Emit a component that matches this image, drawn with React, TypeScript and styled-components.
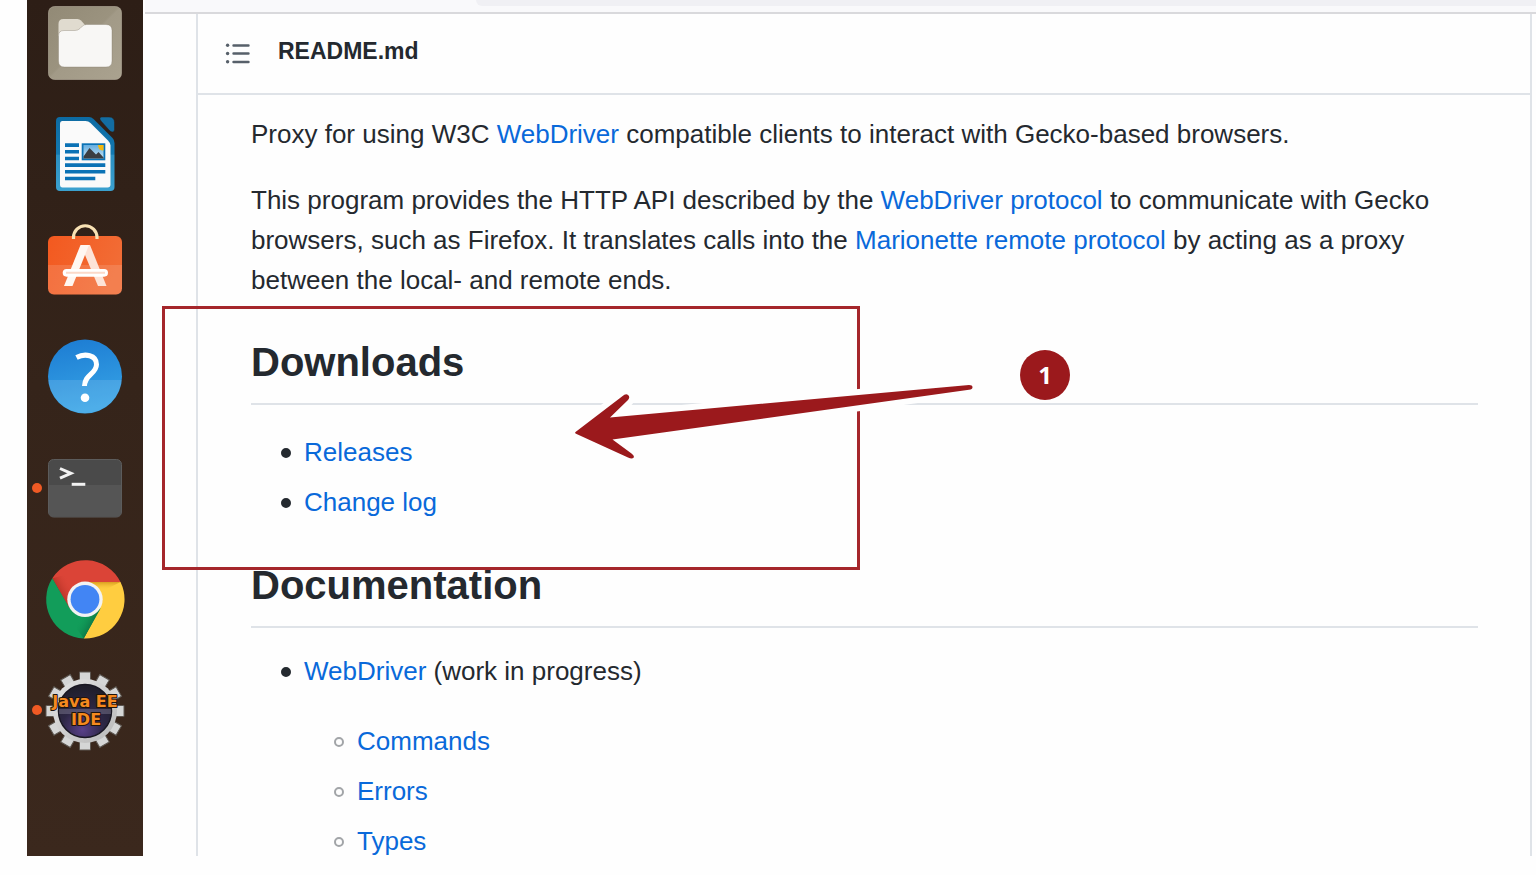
import React from "react";
import styled, { createGlobalStyle } from "styled-components";

const colors = {
  text: "#24292f",
  link: "#0969da",
  line: "#dfe3e8",
  mark: "#9b191c",
};

const GlobalStyle = createGlobalStyle`
  *, *::before, *::after { box-sizing: border-box; }
  body { margin: 0; background: #fefefe; }
`;

const Screen = styled.div`
  display: flex;
  height: 100vh;
  padding: 0 0 19px 27px;
  overflow: hidden;
  font-family: "Liberation Sans", Arial, sans-serif;
  color: ${colors.text};
`;

const Dock = styled.nav`
  flex: 0 0 116px;
  display: flex;
  flex-direction: column;
  align-items: center;
  gap: 31px;
  padding-top: 4px;
  background: linear-gradient(#2d1e16, #35241a 45%, #3b281d);
  overflow: hidden;
`;

const DockButton = styled.button<{ $running?: boolean }>`
  position: relative;
  flex: none;
  width: 80px;
  height: 80px;
  padding: 0;
  border: 0;
  background: none;

  &::before {
    content: "";
    display: ${(p) => (p.$running ? "block" : "none")};
    position: absolute;
    left: -13px;
    top: 35px;
    width: 10px;
    height: 10px;
    border-radius: 50%;
    background: #f05a24;
  }

  svg {
    display: block;
    width: 80px;
    height: 80px;
    overflow: visible;
  }
`;

const Browser = styled.div`
  flex: 1;
  min-width: 0;
  display: flex;
  flex-direction: column;
  overflow: hidden;
  padding-left: 2px;
`;

const Toolbar = styled.div`
  flex: none;
  height: 14px;
  display: flex;
  align-items: flex-start;
  padding-left: 331px;
  background: #f9f9fb;
  border-bottom: 2px solid #d9d9dc;
`;

const AddressBar = styled.div`
  flex: 1;
  height: 6px;
  border-bottom-left-radius: 6px;
  background: #f0f0f4;
`;

const Page = styled.main`
  flex: 1;
  min-height: 0;
  padding: 0 4px 0 51px;
`;

const Readme = styled.article`
  position: relative;
  height: 100%;
  border: solid ${colors.line};
  border-width: 0 2px;
`;

const ReadmeHeader = styled.header`
  display: flex;
  align-items: center;
  gap: 28px;
  height: 81px;
  padding: 0 27px 6px;
  border-bottom: 2px solid ${colors.line};

  svg {
    flex: none;
    width: 25px;
    height: 25px;
    margin-top: 6px;
  }
`;

const FileName = styled.h1`
  margin: 0;
  font-size: 23px;
  line-height: 36px;
  font-weight: 700;
`;

const Body = styled.div`
  padding: 19px 52px 0 53px;
  font-size: 26px;
  line-height: 40px;
`;

const Paragraph = styled.p`
  margin: 0 0 26px;
`;

const Heading = styled.h2`
  margin: 37px 0 23px;
  padding-bottom: 16px;
  border-bottom: 2px solid ${colors.line};
  font-size: 40px;
  line-height: 50px;
  font-weight: 700;
`;

const listMargins = {
  tight: "27px 0 38px",
  loose: "23px 0 38px",
  nested: "30px 0 0",
};

const List = styled.ul<{ $kind: keyof typeof listMargins }>`
  margin: ${(p) => listMargins[p.$kind]};
  padding-left: 53px;
  list-style-type: none;

  & > li {
    position: relative;
  }

  & > li + li {
    margin-top: 10px;
  }

  & > li::before {
    content: "";
    position: absolute;
    left: -23px;
    top: 16px;
    width: 10px;
    height: 10px;
    border-radius: 50%;
    border: ${(p) => (p.$kind === "nested" ? "2px solid #a2a5a8" : `5px solid ${colors.text}`)};
  }
`;

const Link = styled.a`
  color: ${colors.link};
  text-decoration: none;
`;

const Highlight = styled.div`
  position: absolute;
  left: -36px;
  top: 292px;
  width: 698px;
  height: 264px;
  border: 3px solid #a5262b;
`;

const Arrow = styled.svg`
  position: absolute;
  left: 364px;
  top: 367px;
  width: 430px;
  height: 90px;
  overflow: visible;
`;

const Badge = styled.div`
  position: absolute;
  left: 822px;
  top: 336px;
  width: 50px;
  height: 50px;
  border-radius: 50%;
  background: ${colors.mark};
  color: #fff;
  font: 700 24px/50px "Open Sans", sans-serif;
  text-align: center;
`;

const FilesIcon = () => (
  <svg viewBox="0 0 80 80" aria-hidden="true">
    <defs>
      <linearGradient id="files" x1="0" y1="0" x2="1" y2="1">
        <stop offset="0" stopColor="#928a76" />
        <stop offset="0.48" stopColor="#9b937f" />
        <stop offset="0.5" stopColor="#a29a87" />
        <stop offset="1" stopColor="#aaa28f" />
      </linearGradient>
    </defs>
    <rect x="3.500" y="2.500" width="73" height="73" rx="6" fill="url(#files)" stroke="#b5ae9c" strokeOpacity=".6" strokeWidth="1" />
    <path d="M13.500 32V20q0-5 5-5h14q2 0 3.500 1.500l5 5.500v10z" fill="#e0dbcf" />
    <path d="M13.500 32q0-5.500 5.500-5.500h11q3 0 5-2l2.500-2.500q1.500-1.500 4-1.500H61q6 0 6 6V57q0 6-6 6H19.500q-6 0-6-6z" fill="#f8f7f5" stroke="#7d7564" strokeOpacity=".35" />
  </svg>
);

const WriterIcon = () => (
  <svg viewBox="0 0 80 80" aria-hidden="true">
    <defs>
      <linearGradient id="writer" x1="0" y1="0" x2="0" y2="1">
        <stop offset="0" stopColor="#0d6ba3" />
        <stop offset="0.5" stopColor="#1379b1" />
        <stop offset="0.52" stopColor="#2b8fc1" />
        <stop offset="1" stopColor="#3ba1cf" />
      </linearGradient>
      <linearGradient id="writerSky" x1="0" y1="0" x2="0" y2="1">
        <stop offset="0" stopColor="#66aee0" />
        <stop offset="1" stopColor="#c5e2f3" />
      </linearGradient>
    </defs>
    <path d="M15 2h29q2.500 0 4.500 2L67.500 23q2 2 2 5v44q0 4-4 4H15q-4 0-4-4V6q0-4 4-4z" fill="url(#writer)" />
    <path d="M56.500 2H64q5.500 0 5.500 5.500V14.500q0 3-2.500 2.500-1.500-.3-3-2L56 6q-2.500-3.500.5-4z" fill="#136da2" stroke="#2d1e16" strokeWidth=".5" />
    <path d="M17.500 6h23q3 0 5 2l17.500 17.500q2.500 2.500 2.500 5V69.500q0 3-3 3H17.500q-2.500 0-2.500-3V9q0-3 2.500-3z" fill="#fafafa" />
    <g fill="#0b72b5">
      <path d="M20 28.300h14V32H20zM20 35h14v3.500H20zM20 41.700h14v3.500H20zM20 48.300h40.300V52H20zM20 55h40.300v3.500H20zM20 61.700h30.300v3.500H20z" />
      <path d="M36.700 28.300h23.600v17H36.700z" />
    </g>
    <path d="M38.500 30h20v13.500h-20z" fill="url(#writerSky)" />
    <path d="M53 30h5.500v5.500q-5.500 0-5.500-5.500z" fill="#f5b80d" />
    <path d="M38.500 41.500 44.500 33l6.500 6.500 2.500-2.500 5 5.500v1h-20z" fill="#3b3e42" />
  </svg>
);

const SoftwareIcon = () => (
  <svg viewBox="0 0 80 80" aria-hidden="true">
    <defs>
      <linearGradient id="bag" x1="0" y1="0" x2="1" y2="0.3">
        <stop offset="0" stopColor="#f3591f" />
        <stop offset="1" stopColor="#f26c35" />
      </linearGradient>
    </defs>
    <rect x="3" y="10" width="74" height="58.500" rx="6" fill="url(#bag)" />
    <path d="M3 39h74v23.500q0 6-6 6H9q-6 0-6-6z" fill="#fff" fillOpacity=".13" />
    <path d="M28.500 13V11.500a11.700 11.700 0 0 1 23.500 0V13" fill="none" stroke="#f9e2b4" strokeWidth="3.200" />
    <path d="M36 19h9l16.500 41H53L40 29z" fill="#fde3d7" />
    <path d="M35.500 19H44L27.500 60h-8.500z" fill="#fff7f2" />
    <rect x="17.700" y="43" width="45.300" height="7.700" rx="3.850" fill="#fff" />
    <path d="M21 46.800h39" stroke="#fbd9c9" strokeWidth="2" />
  </svg>
);

const HelpIcon = () => (
  <svg viewBox="0 0 80 80" aria-hidden="true">
    <defs>
      <linearGradient id="help" x1="0" y1="0" x2="0.2" y2="1">
        <stop offset="0" stopColor="#1c7bd2" />
        <stop offset="1" stopColor="#36a3e6" />
      </linearGradient>
    </defs>
    <circle cx="40" cy="39.500" r="37" fill="url(#help)" />
    <path d="M3.200 43h73.600A37 37 0 0 1 3.200 43z" fill="#fff" fillOpacity=".12" />
    <path d="M31.500 20.500C40 16 51.500 18 51.500 27.500C51.500 37 39.500 37.500 39.500 49" fill="none" stroke="#fff" strokeWidth="5" />
    <circle cx="40" cy="60.700" r="4.300" fill="#fff" />
  </svg>
);

const TerminalIcon = () => (
  <svg viewBox="0 0 80 80" aria-hidden="true">
    <rect x="3.500" y="11.500" width="73" height="57.500" rx="5" fill="#4a4a4a" stroke="#5c5c5c" />
    <path d="M4 37h72v27q0 4.500-4.500 4.500H8.500Q4 68.500 4 64z" fill="#555" />
    <path d="M15 20.500 26 25.300 15 30.200" fill="none" stroke="#f2f2f2" strokeWidth="3" />
    <path d="M26.700 36.300h13.600" stroke="#f2f2f2" strokeWidth="3" />
  </svg>
);

const ChromeIcon = () => (
  <svg viewBox="0 0 80 80" aria-hidden="true">
    <defs>
      <linearGradient id="redShade" gradientUnits="userSpaceOnUse" x1="14" y1="34" x2="27" y2="27">
        <stop offset="0" stopColor="#a52b1f" stopOpacity=".7" />
        <stop offset="1" stopColor="#db4437" stopOpacity="0" />
      </linearGradient>
      <linearGradient id="yellowShade" gradientUnits="userSpaceOnUse" x1="0" y1="23" x2="0" y2="31">
        <stop offset="0" stopColor="#c98a12" stopOpacity=".7" />
        <stop offset="1" stopColor="#ffcd40" stopOpacity="0" />
      </linearGradient>
      <linearGradient id="greenShade" gradientUnits="userSpaceOnUse" x1="48" y1="68" x2="34" y2="60">
        <stop offset="0" stopColor="#0a5f39" stopOpacity=".7" />
        <stop offset="1" stopColor="#0f9d58" stopOpacity="0" />
      </linearGradient>
    </defs>
    <path d="M24 49 7.300 19.300A39.200 39.200 0 0 1 75.500 23L54 32z" fill="#db4437" />
    <path d="M7.300 19.300 20 16 40 40 24 49z" fill="url(#redShade)" />
    <path d="M40 23H75.500A39.200 39.200 0 0 1 38.700 79.500L55 49 40 40.300z" fill="#ffcd40" />
    <path d="M40 23h35.500L56 33 40 33z" fill="url(#yellowShade)" />
    <path d="M7.300 19.300 24.500 49 55.500 49.500 38.700 79.500A39.200 39.200 0 0 1 7.300 19.300z" fill="#129d5a" />
    <path d="M30 56 55.500 49.500 38.700 79.500 32 70z" fill="url(#greenShade)" />
    <circle cx="40" cy="40.300" r="17.700" fill="#f3f3f3" />
    <circle cx="40" cy="40.300" r="14.400" fill="#4285f4" />
  </svg>
);

const EclipseLabel = styled.text`
  font: 700 16px "DejaVu Sans", sans-serif;
  fill: #f58a1f;
  stroke: #21140a;
  stroke-width: 2px;
  stroke-linejoin: round;
  paint-order: stroke;
  text-anchor: middle;
`;

const gearTeeth = Array.from({ length: 12 }, (_, i) => i * 30);

const EclipseIcon = () => (
  <svg viewBox="0 0 80 80" aria-hidden="true">
    <defs>
      <radialGradient id="planet" cx="0.45" cy="0.85" r="0.8">
        <stop offset="0" stopColor="#59408a" />
        <stop offset="0.5" stopColor="#2d2745" />
        <stop offset="1" stopColor="#201e2b" />
      </radialGradient>
      <linearGradient id="gear" x1="0" y1="0" x2="1" y2="1">
        <stop offset="0" stopColor="#e4e4e4" />
        <stop offset="1" stopColor="#b9b9b9" />
      </linearGradient>
    </defs>
    <g fill="#d5d6d6" stroke="#5c5650" strokeWidth="1">
      {gearTeeth.map((angle) => (
        <path key={angle} d="M34.500 14V2h11v12z" transform={`rotate(${angle} 40 41)`} />
      ))}
    </g>
    <circle cx="40" cy="41" r="32" fill="url(#gear)" />
    <circle cx="40" cy="41" r="26.500" fill="url(#planet)" stroke="#191722" strokeWidth="1.500" />
    <path d="M14 39h52v5H14z" fill="#9a97b0" fillOpacity=".35" />
    <EclipseLabel x="40" y="37">Java EE</EclipseLabel>
    <EclipseLabel x="41" y="55">IDE</EclipseLabel>
  </svg>
);

const ListIcon = () => (
  <svg viewBox="0 0 25 25" aria-hidden="true">
    <path d="M8.500 4.500h15M8.500 12.500h15M8.500 21h15" stroke="#57606a" strokeWidth="2.400" strokeLinecap="round" />
    <g fill="#57606a">
      <circle cx="2.600" cy="4.200" r="1.700" />
      <circle cx="2.600" cy="12.500" r="1.700" />
      <circle cx="2.600" cy="20.800" r="1.700" />
    </g>
  </svg>
);

const apps = [
  { name: "Files", Icon: FilesIcon },
  { name: "LibreOffice Writer", Icon: WriterIcon },
  { name: "Ubuntu Software", Icon: SoftwareIcon },
  { name: "Help", Icon: HelpIcon },
  { name: "Terminal", Icon: TerminalIcon, running: true },
  { name: "Google Chrome", Icon: ChromeIcon },
  { name: "Eclipse", Icon: EclipseIcon, running: true },
];

const arrowPath =
  "M13.500 51 60 15.500Q64 12 66 14Q68.500 16 66 19L48 36.500 407 4Q410.500 4 410.500 6.200T407 8.800L50.500 58.500 69.500 72.500Q73 75 71.500 76.800Q70 78.500 66 76.500L14 52.800Q12.500 52 13.500 51z";

export default function App() {
  return (
    <>
      <GlobalStyle />
      <Screen>
        <Dock aria-label="Applications">
          {apps.map(({ name, Icon, running }) => (
            <DockButton key={name} type="button" aria-label={name} $running={running}>
              <Icon />
            </DockButton>
          ))}
        </Dock>
        <Browser>
          <Toolbar>
            <AddressBar />
          </Toolbar>
          <Page>
            <Readme>
              <ReadmeHeader>
                <ListIcon />
                <FileName>README.md</FileName>
              </ReadmeHeader>
              <Body>
                <Paragraph>
                  Proxy for using W3C <Link href="#webdriver">WebDriver</Link> compatible clients to interact with
                  Gecko-based browsers.
                </Paragraph>
                <Paragraph>
                  This program provides the HTTP API described by the{" "}
                  <Link href="#protocol">WebDriver protocol</Link> to communicate with Gecko browsers, such as Firefox.
                  It translates calls into the <Link href="#marionette">Marionette remote protocol</Link> by acting as
                  a proxy between the local- and remote ends.
                </Paragraph>
                <Heading>Downloads</Heading>
                <List $kind="tight">
                  <li><Link href="#releases">Releases</Link></li>
                  <li><Link href="#changes">Change log</Link></li>
                </List>
                <Heading>Documentation</Heading>
                <List $kind="loose">
                  <li>
                    <Link href="#docs">WebDriver</Link> (work in progress)
                    <List $kind="nested">
                      <li><Link href="#commands">Commands</Link></li>
                      <li><Link href="#errors">Errors</Link></li>
                      <li><Link href="#types">Types</Link></li>
                    </List>
                  </li>
                </List>
              </Body>
              <Highlight />
              <Arrow viewBox="0 0 430 90" aria-hidden="true">
                <path d={arrowPath} fill="#fff" stroke="#fefefe" strokeWidth="12" strokeLinejoin="round" />
                <path d={arrowPath} fill={colors.mark} />
              </Arrow>
              <Badge>1</Badge>
            </Readme>
          </Page>
        </Browser>
      </Screen>
    </>
  );
}
